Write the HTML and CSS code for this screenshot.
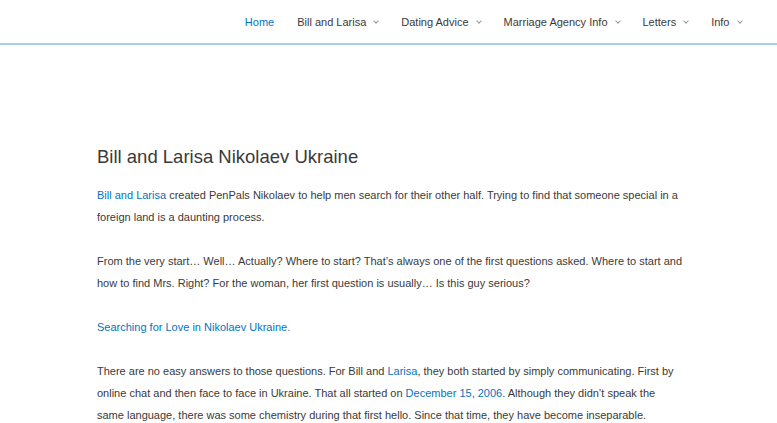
FILE: index.html
```html
<!DOCTYPE html>
<html lang="en">

<head>
    <meta charset="UTF-8">
    <meta name="viewport" content="width=device-width, initial-scale=1.0">
    <title>Bill and Larisa Nikolaev Ukraine</title>
    <link rel="stylesheet" href="styles.css">
</head>

<body>
    <header class="site-header">
        <nav class="main-nav">
            <a class="nav-item current" href="#">Home</a>
            <a class="nav-item" href="#">Bill and Larisa <span class="caret"></span></a>
            <a class="nav-item" href="#">Dating Advice <span class="caret"></span></a>
            <a class="nav-item" href="#">Marriage Agency Info <span class="caret"></span></a>
            <a class="nav-item" href="#">Letters <span class="caret"></span></a>
            <a class="nav-item" href="#">Info <span class="caret"></span></a>
        </nav>
    </header>

    <main class="content">
        <h1 class="entry-title">Bill and Larisa Nikolaev Ukraine</h1>

        <p><a href="#">Bill and Larisa</a> created PenPals Nikolaev to help men search for their other half. Trying to find that someone special in a foreign land is a daunting process.</p>

        <p>From the very start… Well… Actually? Where to start? That’s always one of the first questions asked. Where to start and how to find Mrs. Right? For the woman, her first question is usually… Is this guy serious?</p>

        <p><a href="#">Searching for Love in Nikolaev Ukraine.</a></p>

        <p>There are no easy answers to those questions. For Bill and <a href="#">Larisa</a>, they both started by simply communicating. First by online chat and then face to face in Ukraine. That all started on <a href="#">December 15, 2006</a>. Although they didn’t speak the same language, there was some chemistry during that first hello. Since that time, they have become inseparable.</p>
    </main>
</body>

</html>
```

FILE: styles.css
```css
* {
    box-sizing: border-box;
}

body {
    margin: 0;
    background: #fff;
    color: #3a3a3a;
    font-family: "Liberation Sans", Arial, sans-serif;
    font-size: 11px;
}

a {
    color: #0274be;
    text-decoration: none;
}

.site-header {
    height: 45px;
    border-bottom: 2px solid #a9cdec;
}

.main-nav {
    display: flex;
    justify-content: flex-end;
    align-items: center;
    height: 43px;
    padding-right: 24px;
}

.nav-item {
    display: flex;
    align-items: center;
    padding: 0 11.5px;
    color: #3a3a3a;
    font-size: 11px;
}

.nav-item.current {
    color: #0274be;
}

/* little chevron after each menu with children */
.caret {
    width: 4px;
    height: 4px;
    margin-left: 8px;
    margin-top: -1px;
    border-right: 1px solid #999;
    border-bottom: 1px solid #999;
    transform: rotate(45deg);
}

.content {
    width: 586px;
    margin: 0 0 0 97px;
    padding-top: 101px;
}

.entry-title {
    margin: 0 0 16px;
    font-size: 18.5px;
    font-weight: normal;
    line-height: 1.2;
    color: #3a3a3a;
}

.content p {
    margin: 0 0 22px;
    line-height: 22px;
}
```
